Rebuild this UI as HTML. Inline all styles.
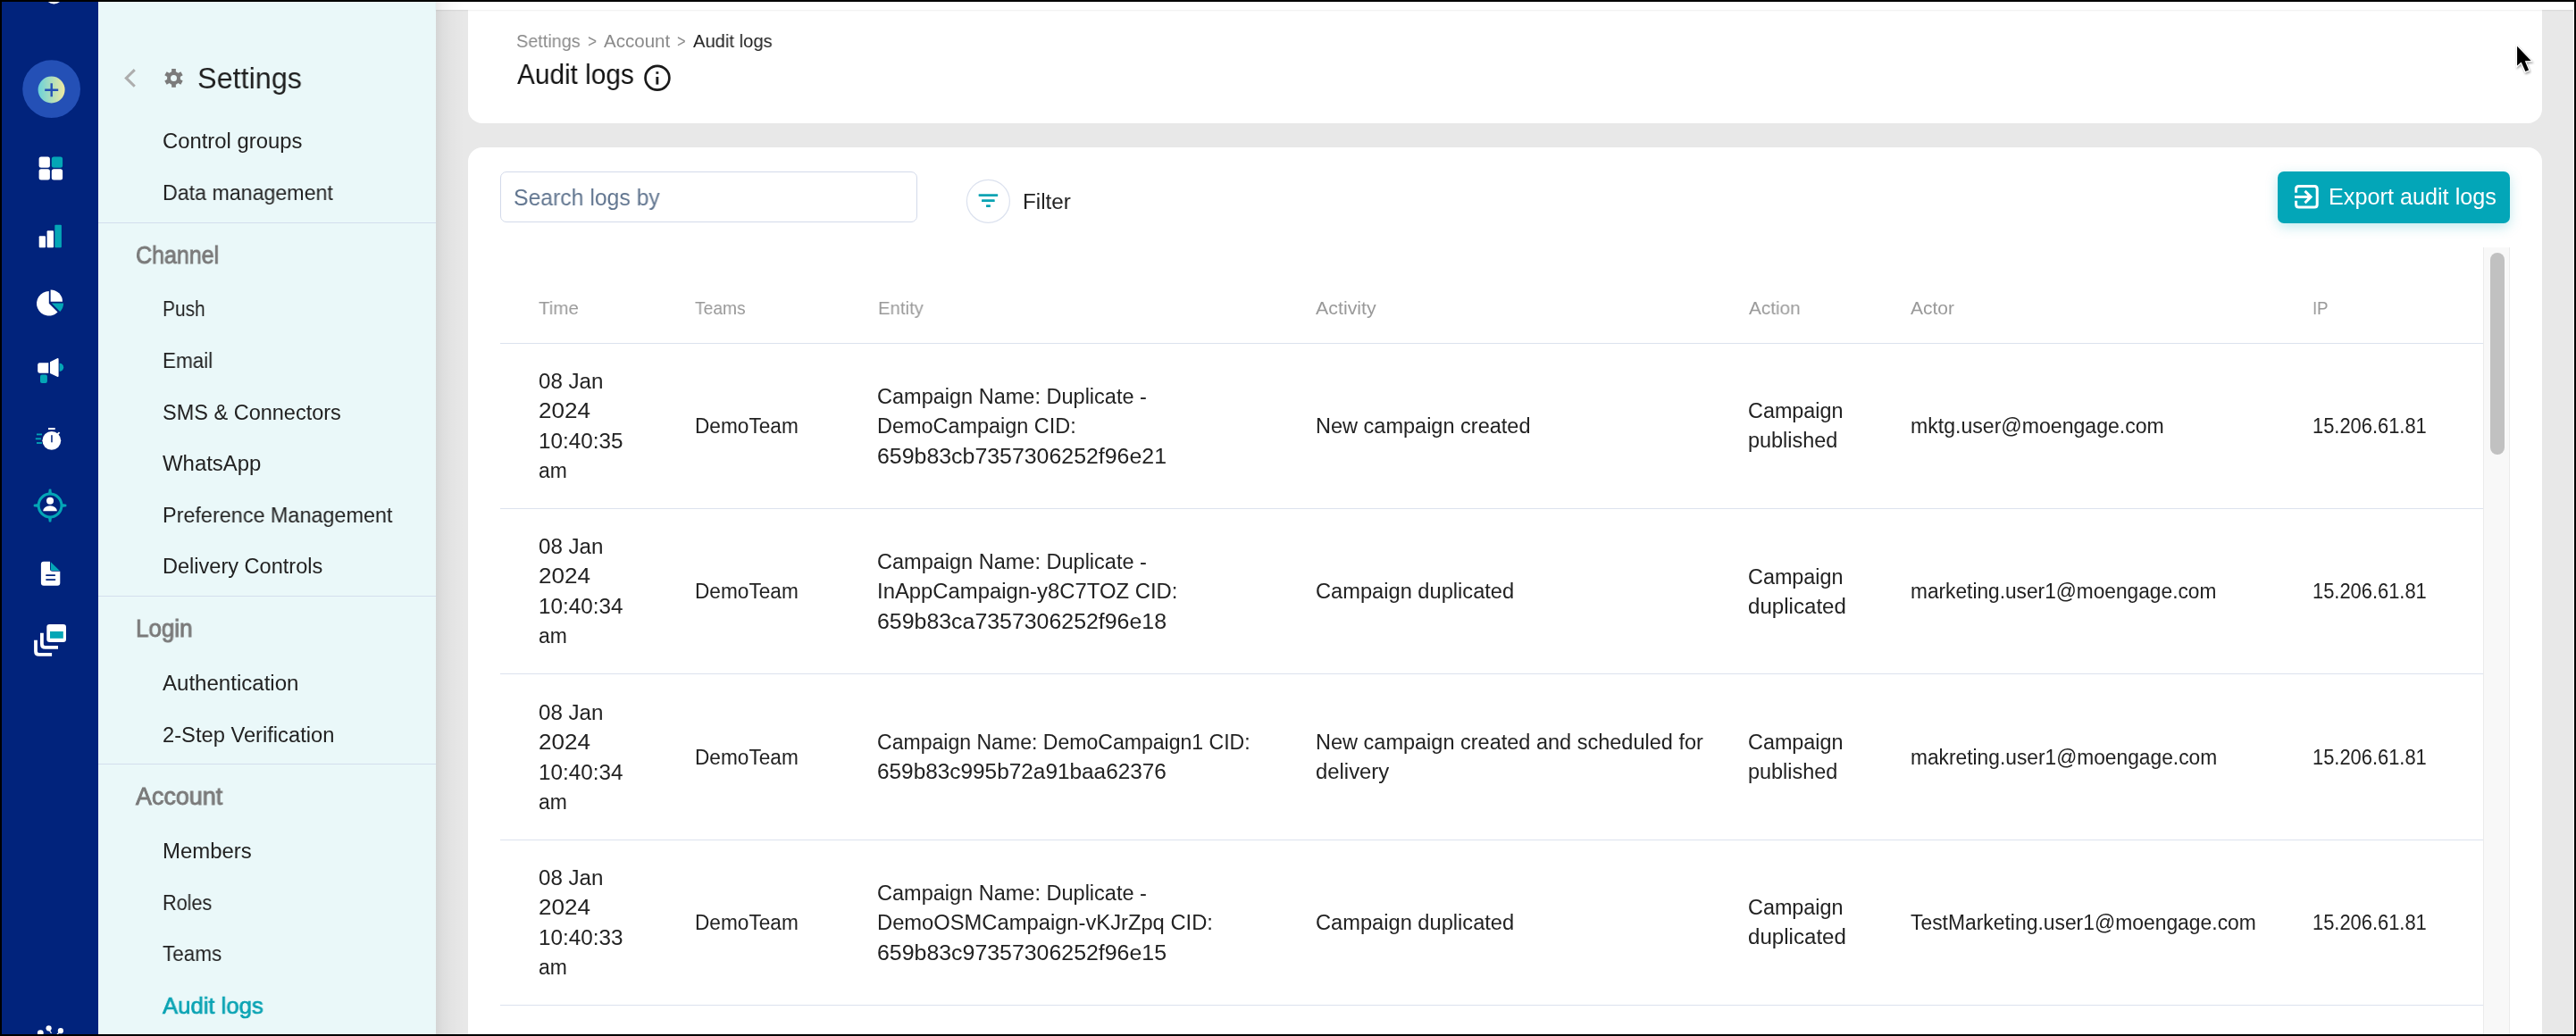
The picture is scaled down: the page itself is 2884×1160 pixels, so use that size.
<!DOCTYPE html>
<html><head><meta charset="utf-8"><style>
html,body{margin:0;padding:0;width:2884px;height:1160px;overflow:hidden;background:#000}
.t{position:absolute;white-space:nowrap;line-height:1;font-family:'Liberation Sans', sans-serif;will-change:transform}
</style></head><body>
<div style="position:absolute;left:0px;top:0px;width:2884px;height:1160px;background:#000"></div><div style="position:absolute;left:2px;top:2px;width:108px;height:1156px;background:#01237c"></div><div style="position:absolute;left:110px;top:2px;width:378px;height:1156px;background:#eaf8f9"></div><div style="position:absolute;left:488px;top:2px;width:2393px;height:1156px;background:#e8e8e8"></div><div style="position:absolute;left:2881px;top:2px;width:1px;height:1156px;background:#fff"></div><div style="position:absolute;left:524px;top:11px;width:2322px;height:127px;background:#fff;border-radius:0 0 16px 16px"></div><div style="position:absolute;left:524px;top:165px;width:2322px;height:993px;background:#fff;border-radius:16px 16px 0 0"></div><div style="position:absolute;left:488px;top:2px;width:2393px;height:9px;background:#fff;box-shadow:0 1px 1.5px rgba(0,0,0,0.07)"></div><div style="position:absolute;left:488px;top:2px;width:36px;height:1156px;background:linear-gradient(to right, rgba(0,10,10,0.085), rgba(0,10,10,0.045) 8px, rgba(0,0,0,0.018) 18px, rgba(0,0,0,0) 32px)"></div><svg style="position:absolute;left:0;top:0" width="110" height="1160" viewBox="0 0 110 1160"><defs><linearGradient id="pg" x1="0" y1="0" x2="1" y2="0"><stop offset="0" stop-color="#6ad2da"/><stop offset="1" stop-color="#efe9a0"/></linearGradient><clipPath id="navclip"><rect x="2" y="2" width="108" height="1156"/></clipPath></defs><g clip-path="url(#navclip)"><circle cx="60.4" cy="-5.5" r="10" fill="#fff"/><circle cx="57.6" cy="99.7" r="32.4" fill="#2450b6"/><circle cx="57.6" cy="100.5" r="15" fill="url(#pg)"/><path d="M50.2 100.8H65.2M57.7 93.3V108.3" stroke="#2450b6" stroke-width="2.4"/><rect x="43.6" y="175.5" width="12.3" height="12.3" rx="2.5" fill="#fff"/><rect x="57.8" y="175.5" width="12.3" height="12.3" rx="2.5" fill="#04a6b6"/><rect x="43.6" y="189.3" width="12.3" height="12.3" rx="2.5" fill="#fff"/><rect x="57.8" y="189.3" width="12.3" height="12.3" rx="2.5" fill="#fff"/><rect x="43.7" y="264.2" width="7.3" height="13.1" rx="1" fill="#fff"/><rect x="52.6" y="258.2" width="7.4" height="19.1" rx="1" fill="#fff"/><rect x="61.3" y="251.8" width="7.6" height="25.5" rx="1" fill="#04a6b6"/><path d="M54.8 339.8L54.8 326.0A13.8 13.8 0 1 0 64.56 349.56Z" fill="#fff"/><path d="M56.6 337.8L56.6 324.40000000000003A13.4 13.4 0 0 1 70.0 337.8Z" fill="#fff"/><path d="M57.8 339.6L71.1 339.6A13.3 13.3 0 0 1 67.20 349.00Z" fill="#04a6b6"/><path d="M44.5 406.2H54.3V417.7H44.5Q42.2 417.7 42.2 415.4V408.5Q42.2 406.2 44.5 406.2Z" fill="#fff"/><path d="M56 405.3L64 401.2Q65.6 400.6 65.6 402.4V420.8Q65.6 422.6 64 421.8L56 418Z" fill="#fff"/><path d="M66.6 406.7A4.6 4.6 0 0 1 66.6 415.9Z" fill="#04a6b6"/><rect x="45" y="419.4" width="7.9" height="9.6" rx="2" fill="#04a6b6"/><circle cx="57.8" cy="493.3" r="10.4" fill="#fff"/><rect x="54" y="479" width="7.7" height="2.1" fill="#fff"/><path d="M64.2 486.5L66.6 484.1" stroke="#fff" stroke-width="1.8"/><rect x="57.2" y="487.2" width="1.5" height="8.1" fill="#01237c"/><rect x="41" y="485.5" width="6" height="1.8" fill="#04a6b6"/><rect x="39.8" y="490.4" width="6.1" height="1.8" fill="#04a6b6"/><rect x="41" y="495.1" width="6" height="1.8" fill="#04a6b6"/><circle cx="56.05" cy="566" r="12.9" fill="none" stroke="#04a6b6" stroke-width="3"/><g fill="#04a6b6" transform="translate(56.05 566)"><path d="M-2 -13L2 -13L1.3 -18.2Q0 -18.6 -1.3 -18.2Z" transform="rotate(0)"/><path d="M-2 -13L2 -13L1.3 -18.2Q0 -18.6 -1.3 -18.2Z" transform="rotate(90)"/><path d="M-2 -13L2 -13L1.3 -18.2Q0 -18.6 -1.3 -18.2Z" transform="rotate(180)"/><path d="M-2 -13L2 -13L1.3 -18.2Q0 -18.6 -1.3 -18.2Z" transform="rotate(270)"/></g><circle cx="56.05" cy="560.8" r="4" fill="#fff"/><path d="M48.2 572.2A7.85 5.9 0 0 1 63.9 572.2Z" fill="#fff"/><path d="M48.9 628.8H56V637Q56 639.8 58.8 639.8H67.3V652.7Q67.3 655.7 64.3 655.7H48.9Q45.9 655.7 45.9 652.7V631.8Q45.9 628.8 48.9 628.8Z" fill="#fff"/><path d="M56.8 629.2L66.8 638.9H58.3Q56.8 638.9 56.8 637.4Z" fill="#04a6b6"/><rect x="51.1" y="643.3" width="11" height="1.7" rx="0.8" fill="#01237c"/><rect x="51.1" y="648.2" width="11.3" height="1.7" rx="0.8" fill="#01237c"/><rect x="52.3" y="698.9" width="21.7" height="20" rx="3.2" fill="#fff"/><rect x="56" y="707" width="14.8" height="7.8" fill="#04a6b6"/><path d="M46.9 708.7V721.2Q46.9 724.8 50.5 724.8H65" fill="none" stroke="#fff" stroke-width="3.8"/><path d="M40 716.8V729.3Q40 732.9 43.6 732.9H58.1" fill="none" stroke="#fff" stroke-width="3.8"/><circle cx="45.3" cy="1156.6" r="3.4" fill="#fff"/><circle cx="54.6" cy="1151.3" r="3.1" fill="#fff"/><circle cx="67.9" cy="1154.2" r="3.1" fill="#fff"/><path d="M55 1153L57.5 1157M66.5 1156L64 1158" stroke="#fff" stroke-width="1.2"/></g></svg><div class="t" style="left:221.3px;top:69.62px;font-size:34px;color:#1f1f1f;font-weight:400;transform:scaleX(0.9522);transform-origin:0 0;">Settings</div><div class="t" style="left:181.8px;top:146.71px;font-size:23.5px;color:#222;font-weight:400;transform:scaleX(1.0141);transform-origin:0 0;">Control groups</div><div class="t" style="left:181.8px;top:204.61px;font-size:23.5px;color:#222;font-weight:400;transform:scaleX(0.9871);transform-origin:0 0;">Data management</div><div class="t" style="left:181.8px;top:335.31px;font-size:23.5px;color:#222;font-weight:400;transform:scaleX(0.8898);transform-origin:0 0;">Push</div><div class="t" style="left:181.8px;top:393.21px;font-size:23.5px;color:#222;font-weight:400;transform:scaleX(0.9563);transform-origin:0 0;">Email</div><div class="t" style="left:181.8px;top:451.11px;font-size:23.5px;color:#222;font-weight:400;transform:scaleX(0.9987);transform-origin:0 0;">SMS &amp; Connectors</div><div class="t" style="left:181.8px;top:508.11px;font-size:23.5px;color:#222;font-weight:400;transform:scaleX(1.0184);transform-origin:0 0;">WhatsApp</div><div class="t" style="left:181.8px;top:565.81px;font-size:23.5px;color:#222;font-weight:400;transform:scaleX(0.9954);transform-origin:0 0;">Preference Management</div><div class="t" style="left:181.8px;top:622.81px;font-size:23.5px;color:#222;font-weight:400;transform:scaleX(1.0020);transform-origin:0 0;">Delivery Controls</div><div class="t" style="left:181.8px;top:753.91px;font-size:23.5px;color:#222;font-weight:400;transform:scaleX(1.0233);transform-origin:0 0;">Authentication</div><div class="t" style="left:181.8px;top:811.91px;font-size:23.5px;color:#222;font-weight:400;transform:scaleX(1.0087);transform-origin:0 0;">2-Step Verification</div><div class="t" style="left:181.8px;top:942.31px;font-size:23.5px;color:#222;font-weight:400;transform:scaleX(1.0181);transform-origin:0 0;">Members</div><div class="t" style="left:181.8px;top:999.91px;font-size:23.5px;color:#222;font-weight:400;transform:scaleX(0.9207);transform-origin:0 0;">Roles</div><div class="t" style="left:181.8px;top:1057.21px;font-size:23.5px;color:#222;font-weight:400;transform:scaleX(0.9564);transform-origin:0 0;">Teams</div><div class="t" style="left:181.7px;top:1113.37px;font-size:26.5px;color:#0aa3b3;font-weight:400;transform:scaleX(0.9679);transform-origin:0 0;-webkit-text-stroke:0.7px #0aa3b3;">Audit logs</div><div class="t" style="left:152.2px;top:273.04px;font-size:27px;color:#7a7a7a;font-weight:400;transform:scaleX(0.9267);transform-origin:0 0;-webkit-text-stroke:0.9px #7a7a7a;">Channel</div><div class="t" style="left:152.2px;top:690.54px;font-size:27px;color:#7a7a7a;font-weight:400;transform:scaleX(0.9622);transform-origin:0 0;-webkit-text-stroke:0.9px #7a7a7a;">Login</div><div class="t" style="left:152.2px;top:879.24px;font-size:27px;color:#7a7a7a;font-weight:400;transform:scaleX(0.9958);transform-origin:0 0;-webkit-text-stroke:0.9px #7a7a7a;">Account</div><div style="position:absolute;left:110px;top:249px;width:378px;height:1px;background:#d3deed"></div><div style="position:absolute;left:110px;top:667px;width:378px;height:1px;background:#d3deed"></div><div style="position:absolute;left:110px;top:855px;width:378px;height:1px;background:#d3deed"></div><div class="t" style="left:577.7px;top:35.65px;font-size:20.5px;color:#8a8a8a;font-weight:400;transform:scaleX(0.9677);transform-origin:0 0;">Settings</div><div class="t" style="left:657.6px;top:35.65px;font-size:20.5px;color:#8a8a8a;font-weight:400;transform:scaleX(0.8410);transform-origin:0 0;">&gt;</div><div class="t" style="left:675.6px;top:35.65px;font-size:20.5px;color:#8a8a8a;font-weight:400;transform:scaleX(1.0022);transform-origin:0 0;">Account</div><div class="t" style="left:758.3px;top:35.65px;font-size:20.5px;color:#8a8a8a;font-weight:400;transform:scaleX(0.7927);transform-origin:0 0;">&gt;</div><div class="t" style="left:776.2px;top:35.65px;font-size:20.5px;color:#222;font-weight:400;transform:scaleX(0.9843);transform-origin:0 0;">Audit logs</div><div class="t" style="left:578.5px;top:67.76px;font-size:31px;color:#111;font-weight:400;transform:scaleX(0.9599);transform-origin:0 0;">Audit logs</div><div style="position:absolute;left:560px;top:192px;width:467px;height:57px;box-sizing:border-box;border:1px solid #d3daea;border-radius:7px;background:#fff"></div><div class="t" style="left:575.2px;top:208.74px;font-size:25px;color:#627690;font-weight:400;transform:scaleX(0.9904);transform-origin:0 0;">Search logs by</div><div class="t" style="left:1144.8px;top:215.33px;font-size:23px;color:#222;font-weight:400;transform:scaleX(1.0551);transform-origin:0 0;">Filter</div><div style="position:absolute;left:2550px;top:192px;width:260px;height:58px;background:#03a6b8;border-radius:7px;box-shadow:0 4px 14px rgba(3,166,184,0.25)"></div><div class="t" style="left:2607.4px;top:207.54px;font-size:25px;color:#fff;font-weight:400;transform:scaleX(1.0091);transform-origin:0 0;">Export audit logs</div><svg style="position:absolute;left:130px;top:70px" width="90" height="40" viewBox="130 70 90 40"><path d="M150.8 78.1L141.3 87.4L150.8 96.7" fill="none" stroke="#adadad" stroke-width="3"/><g transform="translate(194.5 87.4)" fill="#7b7b7b"><circle r="7.5"/><rect x="-2.35" y="-10.4" width="4.7" height="20.8" transform="rotate(0)"/><rect x="-2.35" y="-10.4" width="4.7" height="20.8" transform="rotate(60)"/><rect x="-2.35" y="-10.4" width="4.7" height="20.8" transform="rotate(120)"/><circle r="3.5" fill="#eaf8f9"/></g></svg><svg style="position:absolute;left:715px;top:68px" width="45" height="40" viewBox="715 68 45 40"><circle cx="735.95" cy="87.3" r="13.4" fill="none" stroke="#1a1a1a" stroke-width="2.7"/><rect x="734.4" y="80.2" width="2.9" height="2.6" fill="#1a1a1a"/><rect x="734.4" y="86" width="2.9" height="8.6" fill="#1a1a1a"/></svg><svg style="position:absolute;left:1075px;top:195px" width="65" height="60" viewBox="1075 195 65 60"><circle cx="1106.4" cy="225.3" r="24" fill="none" stroke="#dbe1ee" stroke-width="1.2"/><rect x="1095.6" y="217.2" width="21.6" height="2.7" rx="0.6" fill="#0aa3b3"/><rect x="1099" y="223.3" width="14.7" height="2.7" rx="0.6" fill="#0aa3b3"/><rect x="1104" y="229.2" width="4.9" height="2.7" rx="0.6" fill="#0aa3b3"/></svg><svg style="position:absolute;left:2560px;top:200px" width="45" height="40" viewBox="2560 200 45 40"><path d="M2570.6 215.8V211.4Q2570.6 208.4 2573.6 208.4H2591.2Q2594.2 208.4 2594.2 211.4V229.1Q2594.2 232.1 2591.2 232.1H2573.6Q2570.6 232.1 2570.6 229.1V224.7" fill="none" stroke="#fff" stroke-width="3"/><path d="M2569.1 220.5H2587M2580.5 213.9L2587.1 220.5L2580.5 227.1" fill="none" stroke="#fff" stroke-width="3"/></svg><svg style="position:absolute;left:2805px;top:45px" width="40" height="45" viewBox="2805 45 40 45"><defs><filter id="cs" x="-50%" y="-50%" width="200%" height="200%"><feGaussianBlur stdDeviation="1.2"/></filter></defs><path d="M2816.9 49L2816.9 76.2L2822.3 71.6L2826.6 81.7L2832.6 79.3L2828.5 69.6L2835.9 69.2Z" fill="#000" opacity="0.35" filter="url(#cs)" transform="translate(0.8 1.6)"/><path d="M2816.9 49L2816.9 76.2L2822.3 71.6L2826.6 81.7L2832.6 79.3L2828.5 69.6L2835.9 69.2Z" fill="#fff"/><path d="M2818.1 51.8L2818.1 73.4L2822.7 69.4L2827.4 80.1L2831.1 78.6L2826.8 68.3L2833.6 68Z" fill="#000"/></svg><div class="t" style="left:603.1px;top:333.72px;font-size:21px;color:#999;font-weight:400;transform:scaleX(0.9771);transform-origin:0 0;">Time</div><div class="t" style="left:777.5px;top:333.72px;font-size:21px;color:#999;font-weight:400;transform:scaleX(0.9173);transform-origin:0 0;">Teams</div><div class="t" style="left:982.5px;top:333.72px;font-size:21px;color:#999;font-weight:400;transform:scaleX(0.9675);transform-origin:0 0;">Entity</div><div class="t" style="left:1473.0px;top:333.72px;font-size:21px;color:#999;font-weight:400;transform:scaleX(1.0180);transform-origin:0 0;">Activity</div><div class="t" style="left:1957.5px;top:333.72px;font-size:21px;color:#999;font-weight:400;transform:scaleX(0.9877);transform-origin:0 0;">Action</div><div class="t" style="left:2139.1px;top:333.72px;font-size:21px;color:#999;font-weight:400;transform:scaleX(0.9992);transform-origin:0 0;">Actor</div><div class="t" style="left:2589.2px;top:333.72px;font-size:21px;color:#999;font-weight:400;transform:scaleX(0.8809);transform-origin:0 0;">IP</div><div style="position:absolute;left:560px;top:384px;width:2220px;height:1px;background:#dce2ee"></div><div style="position:absolute;left:560px;top:569px;width:2220px;height:1px;background:#dce2ee"></div><div style="position:absolute;left:560px;top:754px;width:2220px;height:1px;background:#dce2ee"></div><div style="position:absolute;left:560px;top:940px;width:2220px;height:1px;background:#dce2ee"></div><div style="position:absolute;left:560px;top:1125px;width:2220px;height:1px;background:#dce2ee"></div><div class="t" style="left:602.9px;top:411.13px;font-size:23px;line-height:33.3px;color:#222"><div style="transform:scaleX(1.0488);transform-origin:0 0">08 Jan</div><div style="transform:scaleX(1.1352);transform-origin:0 0">2024</div><div style="transform:scaleX(1.0548);transform-origin:0 0">10:40:35</div><div style="transform:scaleX(0.9962);transform-origin:0 0">am</div></div><div class="t" style="left:777.9px;top:461.08px;font-size:23px;line-height:33.3px;color:#222"><div style="transform:scaleX(0.9847);transform-origin:0 0">DemoTeam</div></div><div class="t" style="left:982.4px;top:427.78px;font-size:23px;line-height:33.3px;color:#222"><div style="transform:scaleX(1.0223);transform-origin:0 0">Campaign Name: Duplicate -</div><div style="transform:scaleX(1.0187);transform-origin:0 0">DemoCampaign CID:</div><div style="transform:scaleX(1.0825);transform-origin:0 0">659b83cb7357306252f96e21</div></div><div class="t" style="left:1473.3px;top:461.08px;font-size:23px;line-height:33.3px;color:#222"><div style="transform:scaleX(1.0223);transform-origin:0 0">New campaign created</div></div><div class="t" style="left:1957.3px;top:444.43px;font-size:23px;line-height:33.3px;color:#222"><div style="transform:scaleX(1.0165);transform-origin:0 0">Campaign</div><div style="transform:scaleX(1.0194);transform-origin:0 0">published</div></div><div class="t" style="left:2138.8px;top:461.08px;font-size:23px;line-height:33.3px;color:#222"><div style="transform:scaleX(1.0034);transform-origin:0 0">mktg.user@moengage.com</div></div><div class="t" style="left:2588.8px;top:461.08px;font-size:23px;line-height:33.3px;color:#222"><div style="transform:scaleX(0.9513);transform-origin:0 0">15.206.61.81</div></div><div class="t" style="left:602.9px;top:596.38px;font-size:23px;line-height:33.3px;color:#222"><div style="transform:scaleX(1.0488);transform-origin:0 0">08 Jan</div><div style="transform:scaleX(1.1352);transform-origin:0 0">2024</div><div style="transform:scaleX(1.0548);transform-origin:0 0">10:40:34</div><div style="transform:scaleX(0.9962);transform-origin:0 0">am</div></div><div class="t" style="left:777.9px;top:646.33px;font-size:23px;line-height:33.3px;color:#222"><div style="transform:scaleX(0.9847);transform-origin:0 0">DemoTeam</div></div><div class="t" style="left:982.4px;top:613.03px;font-size:23px;line-height:33.3px;color:#222"><div style="transform:scaleX(1.0223);transform-origin:0 0">Campaign Name: Duplicate -</div><div style="transform:scaleX(1.0374);transform-origin:0 0">InAppCampaign-y8C7TOZ CID:</div><div style="transform:scaleX(1.0825);transform-origin:0 0">659b83ca7357306252f96e18</div></div><div class="t" style="left:1473.3px;top:646.33px;font-size:23px;line-height:33.3px;color:#222"><div style="transform:scaleX(1.0282);transform-origin:0 0">Campaign duplicated</div></div><div class="t" style="left:1957.3px;top:629.68px;font-size:23px;line-height:33.3px;color:#222"><div style="transform:scaleX(1.0165);transform-origin:0 0">Campaign</div><div style="transform:scaleX(1.0483);transform-origin:0 0">duplicated</div></div><div class="t" style="left:2138.8px;top:646.33px;font-size:23px;line-height:33.3px;color:#222"><div style="transform:scaleX(0.9871);transform-origin:0 0">marketing.user1@moengage.com</div></div><div class="t" style="left:2588.8px;top:646.33px;font-size:23px;line-height:33.3px;color:#222"><div style="transform:scaleX(0.9513);transform-origin:0 0">15.206.61.81</div></div><div class="t" style="left:602.9px;top:781.63px;font-size:23px;line-height:33.3px;color:#222"><div style="transform:scaleX(1.0488);transform-origin:0 0">08 Jan</div><div style="transform:scaleX(1.1352);transform-origin:0 0">2024</div><div style="transform:scaleX(1.0548);transform-origin:0 0">10:40:34</div><div style="transform:scaleX(0.9962);transform-origin:0 0">am</div></div><div class="t" style="left:777.9px;top:831.58px;font-size:23px;line-height:33.3px;color:#222"><div style="transform:scaleX(0.9847);transform-origin:0 0">DemoTeam</div></div><div class="t" style="left:982.4px;top:814.93px;font-size:23px;line-height:33.3px;color:#222"><div style="transform:scaleX(1.0022);transform-origin:0 0">Campaign Name: DemoCampaign1 CID:</div><div style="transform:scaleX(1.0596);transform-origin:0 0">659b83c995b72a91baa62376</div></div><div class="t" style="left:1473.3px;top:814.93px;font-size:23px;line-height:33.3px;color:#222"><div style="transform:scaleX(1.0221);transform-origin:0 0">New campaign created and scheduled for</div><div style="transform:scaleX(1.0371);transform-origin:0 0">delivery</div></div><div class="t" style="left:1957.3px;top:814.93px;font-size:23px;line-height:33.3px;color:#222"><div style="transform:scaleX(1.0165);transform-origin:0 0">Campaign</div><div style="transform:scaleX(1.0194);transform-origin:0 0">published</div></div><div class="t" style="left:2138.8px;top:831.58px;font-size:23px;line-height:33.3px;color:#222"><div style="transform:scaleX(0.9894);transform-origin:0 0">makreting.user1@moengage.com</div></div><div class="t" style="left:2588.8px;top:831.58px;font-size:23px;line-height:33.3px;color:#222"><div style="transform:scaleX(0.9513);transform-origin:0 0">15.206.61.81</div></div><div class="t" style="left:602.9px;top:966.88px;font-size:23px;line-height:33.3px;color:#222"><div style="transform:scaleX(1.0488);transform-origin:0 0">08 Jan</div><div style="transform:scaleX(1.1352);transform-origin:0 0">2024</div><div style="transform:scaleX(1.0548);transform-origin:0 0">10:40:33</div><div style="transform:scaleX(0.9962);transform-origin:0 0">am</div></div><div class="t" style="left:777.9px;top:1016.83px;font-size:23px;line-height:33.3px;color:#222"><div style="transform:scaleX(0.9847);transform-origin:0 0">DemoTeam</div></div><div class="t" style="left:982.4px;top:983.53px;font-size:23px;line-height:33.3px;color:#222"><div style="transform:scaleX(1.0223);transform-origin:0 0">Campaign Name: Duplicate -</div><div style="transform:scaleX(1.0319);transform-origin:0 0">DemoOSMCampaign-vKJrZpq CID:</div><div style="transform:scaleX(1.0825);transform-origin:0 0">659b83c97357306252f96e15</div></div><div class="t" style="left:1473.3px;top:1016.83px;font-size:23px;line-height:33.3px;color:#222"><div style="transform:scaleX(1.0282);transform-origin:0 0">Campaign duplicated</div></div><div class="t" style="left:1957.3px;top:1000.18px;font-size:23px;line-height:33.3px;color:#222"><div style="transform:scaleX(1.0165);transform-origin:0 0">Campaign</div><div style="transform:scaleX(1.0483);transform-origin:0 0">duplicated</div></div><div class="t" style="left:2138.8px;top:1016.83px;font-size:23px;line-height:33.3px;color:#222"><div style="transform:scaleX(0.9945);transform-origin:0 0">TestMarketing.user1@moengage.com</div></div><div class="t" style="left:2588.8px;top:1016.83px;font-size:23px;line-height:33.3px;color:#222"><div style="transform:scaleX(0.9513);transform-origin:0 0">15.206.61.81</div></div><div style="position:absolute;left:2780px;top:277px;width:30px;height:881px;box-sizing:border-box;background:#f8f8f8;border-left:1px solid #ebebeb;border-right:1px solid #ebebeb"></div><div style="position:absolute;left:2788px;top:283px;width:16px;height:226px;background:#c1c1c1;border-radius:8px"></div>
</body></html>
